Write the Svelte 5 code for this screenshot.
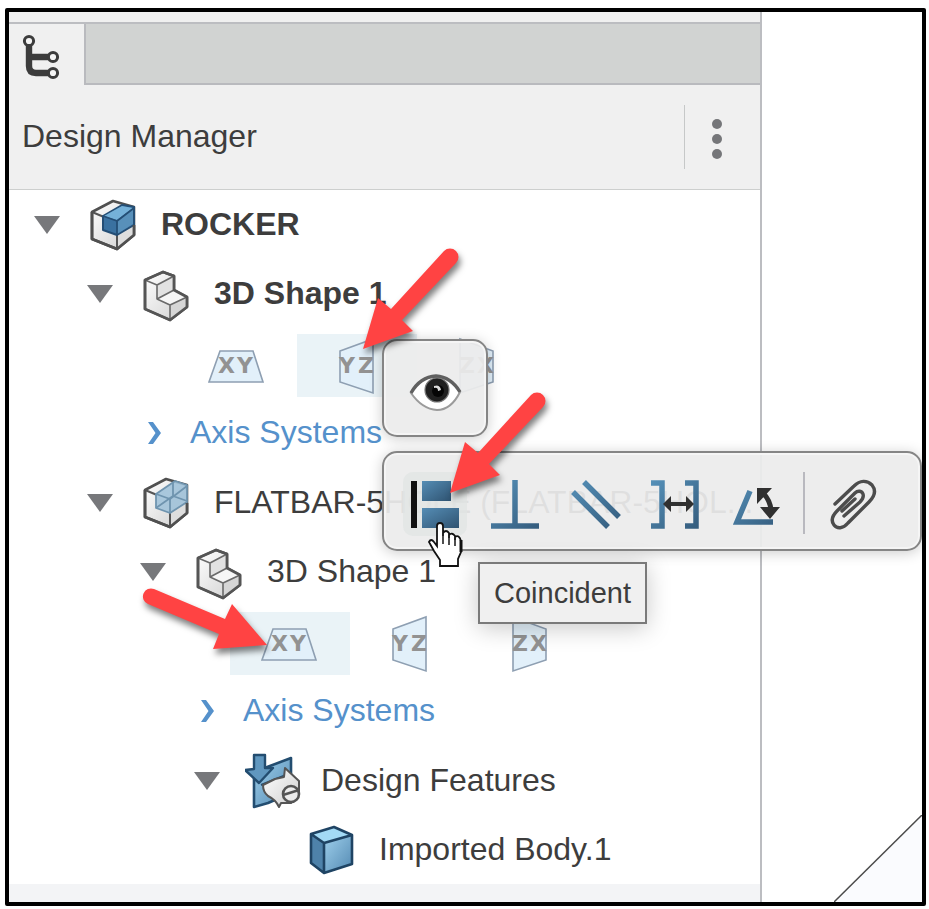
<script>
  const rows = [
    { kind: 'node', indent: 24, icon: 'product', label: 'ROCKER', bold: true },
    { kind: 'node', indent: 77, icon: 'shape', label: '3D Shape 1', bold: true },
    { kind: 'planes', indent: 168, selected: 'YZ' },
    { kind: 'axis', indent: 131, label: 'Axis Systems' },
    { kind: 'node', indent: 77, icon: 'part', label: 'FLATBAR-5HOLE (FLATBAR-5HOL...' },
    { kind: 'node', indent: 130, icon: 'shape', label: '3D Shape 1' },
    { kind: 'planes', indent: 221, selected: 'XY' },
    { kind: 'axis', indent: 184, label: 'Axis Systems' },
    { kind: 'node', indent: 184, icon: 'features', label: 'Design Features' },
    { kind: 'leaf', indent: 294, icon: 'body', label: 'Imported Body.1' }
  ];
  const planes = [
    { name: 'XY', points: '15,17 48,17 58,48 4,48', x: [13, 32] },
    { name: 'YZ', points: '15,17 48,5 48,59 15,48', x: [14, 33] },
    { name: 'ZX', points: '15,5 48,17 48,48 15,59', x: [14, 32] }
  ];
  const tools = ['Coincident', 'Perpendicular', 'Parallel', 'Offset', 'Angle'];
</script>

<svg class="defs" aria-hidden="true">
  <defs>
    <linearGradient id="steel" x1="0" y1="0" x2="1" y2="1">
      <stop offset="0" stop-color="#558db5" /><stop offset="1" stop-color="#2f5371" />
    </linearGradient>
    <linearGradient id="sky" x1="0" y1="0" x2="1" y2="1">
      <stop offset="0" stop-color="#9fd0ec" /><stop offset="1" stop-color="#5389b2" />
    </linearGradient>
    <linearGradient id="silver" x1="0" y1="0" x2="1" y2="1">
      <stop offset="0" stop-color="#ffffff" /><stop offset="1" stop-color="#cfcfcf" />
    </linearGradient>
    <linearGradient id="toolblue" gradientUnits="userSpaceOnUse" x1="10" y1="8" x2="54" y2="56">
      <stop offset="0" stop-color="#5590b8" /><stop offset="1" stop-color="#355d7e" />
    </linearGradient>
  </defs>
</svg>

<main>
  <div class="frame">
    <section class="panel">
      <div class="strip"></div>
      <div class="tabs">
        <button class="tab" aria-label="Design tree">
          <svg width="48" height="56" viewBox="0 0 48 56">
            <path d="M11 16V38Q11 45 18 45H34M11 29H34" fill="none" stroke="#3c3c3c" stroke-width="6.4" />
            <g fill="#f5f5f5" stroke="#3c3c3c" stroke-width="3"><circle cx="11" cy="13" r="4.6" /><circle cx="35" cy="29" r="4.6" /><circle cx="35" cy="45" r="4.6" /></g>
          </svg>
        </button>
        <div class="rest"></div>
      </div>
      <header>
        <h1>Design Manager</h1>
        <button class="more" aria-label="More options">
          <svg width="12" height="44" viewBox="0 0 12 44" fill="#757679"><circle cx="6" cy="9" r="5" /><circle cx="6" cy="24" r="5" /><circle cx="6" cy="39" r="5" /></svg>
        </button>
      </header>

      <ul>
        {#each rows as row}
          <li class={row.kind} style="padding-left: {row.indent}px">
            {#if row.kind === 'planes'}
              {#each planes as plane}
                <button class="plane" class:selected={plane.name === row.selected} aria-label="{plane.name} plane">
                  <svg width="64" height="64" viewBox="0 0 64 64">
                    <polygon points={plane.points} fill="#e2f0fa" stroke="#8e9fb2" stroke-width="1.6" />
                    <text y="39">{#each plane.name as letter, i}<tspan x={plane.x[i]}>{letter}</tspan>{/each}</text>
                  </svg>
                </button>
              {/each}
            {:else}
              {#if row.kind === 'node'}
                <button class="toggle" aria-label="Collapse {row.label}"><svg width="28" height="20" viewBox="0 0 28 20"><path d="M1 1H27L14 19Z" fill="#77787b" /></svg></button>
              {:else if row.kind === 'axis'}
                <button class="toggle" aria-label="Expand {row.label}"><svg width="28" height="28" viewBox="0 0 28 28"><path d="M8 2H13L21 13L13 24H8L15.500 13Z" fill="#5591cb" /></svg></button>
              {/if}
              {#if row.icon}
                <svg class="icon" width="56" height="56" viewBox="0 0 56 56" stroke-linejoin="round">
                  {#if row.icon === 'shape'}
                    <path d="M7 14L25 6L36 10V24L49 31V41L32 54L7 43Z" fill="url(#silver)" stroke="#555" stroke-width="2.4" />
                    <path d="M19 19L36 10V24L19 33Z" fill="#e2e2e2" /><path d="M19 33L36 24L49 31L32 39Z" fill="#f6f6f6" /><path d="M32 39L49 31V41L32 54Z" fill="#d6d6d6" />
                    <path d="M7 14L19 19L36 10M19 19V33L36 24M19 33L32 39L49 31M32 39V54" fill="none" stroke="#6a6a6a" stroke-width="1.6" />
                    <path d="M7 14L25 6L36 10V24L49 31V41L32 54L7 43Z" fill="none" stroke="#555" stroke-width="2.8" />
                  {:else if row.icon === 'product' || row.icon === 'part'}
                    <path d="M7 15L28 4L49 10V38L32 52L7 42Z" fill="url(#silver)" stroke="#505050" stroke-width="2.6" />
                    <path d="M33 26V52L49 38V14Z" fill="#dedede" />
                    <path d="M7 15L19 20M32 38V52" stroke="#555" stroke-width="2" />
                    {#if row.icon === 'product'}
                      <path d="M18 19L37 8L49 10V28L32 38L18 33Z" fill="#3a71a0" stroke="#244e75" stroke-width="2" />
                      <path d="M19 19L37 9L48 11L32 23Z" fill="#75b1d9" /><path d="M32 24L48 12V27L32 37Z" fill="#5890ba" />
                      <path d="M18 19L32 24L49 11M32 24V38" fill="none" stroke="#244e75" stroke-width="1.8" />
                    {:else}
                      <path d="M18 19L37 6L49 10V27L32 38L18 33Z" fill="#9fc2d9" fill-opacity=".88" stroke="#6f94af" stroke-width="1.8" />
                      <path d="M18 19L32 24L49 11M32 24V38M35 8V21L18 33M35 21L49 26" fill="none" stroke="#6f94af" stroke-width="1.8" />
                    {/if}
                    <path d="M18 33V20L7 15V42L32 52L49 38V28" fill="none" stroke="none" />
                    <path d="M7 15V42L32 52L49 38V28" fill="none" stroke="#505050" stroke-width="2.8" />
                  {:else if row.icon === 'features'}
                    <path d="M9 19L46 5V40L23 50L9 54Z" fill="url(#sky)" stroke="#234d70" stroke-width="2.6" />
                    <path d="M16 32L46 20" stroke="#234d70" stroke-width="2" />
                    <path d="M9 2H20V15H28L14 30L0 17L9 16Z" fill="#6097bf" stroke="#234d70" stroke-width="2.4" />
                    <path d="M18 32L30 26L39 24L40 15L54 28V41L46 50H36L34 54Q31 47 23 43Q18 39 18 32Z" fill="url(#silver)" stroke="#555" stroke-width="2" />
                    <circle cx="46" cy="41" r="8" fill="#ececec" stroke="#555" stroke-width="2.6" /><path d="M38 42L54 37" stroke="#555" stroke-width="2.4" />
                  {:else}
                    <path d="M8 12L31 5L49 13V42L21 51L8 41Z" fill="#4e82aa" />
                    <path d="M8 12L31 5L49 13L21 21Z" fill="#a3daf5" /><path d="M21 21L49 13V42L21 51Z" fill="url(#sky)" />
                    <path d="M8 12L31 5L49 13V42L21 51L8 41ZM8 12L21 21L49 13M21 21V51" fill="none" stroke="#1f4464" stroke-width="2.6" />
                  {/if}
                </svg>
              {/if}
              <span class:bold={row.bold}>{row.label}</span>
            {/if}
          </li>
        {/each}
      </ul>
      <div class="footer"></div>
    </section>

    <svg class="edge" width="88" height="87" viewBox="0 0 88 87" aria-hidden="true"><path d="M0 87L88 0V87Z" fill="#fafbfe" /><path d="M0 87L88 0" stroke="#4a4a4a" stroke-width="1.5" /></svg>

    <div class="popup view">
      <button aria-label="Show or hide">
        <svg width="64" height="64" viewBox="0 0 64 64">
          <path d="M8 33Q17 17 33 16Q48 17 57 32Q48 50 34 50Q19 49 8 33Z" fill="#fff" stroke="#9b9b9b" stroke-width="2" />
          <path d="M8 33Q17 17 33 16Q48 17 57 32" fill="none" stroke="#606060" stroke-width="3.4" />
          <circle cx="34" cy="30" r="12" fill="#202020" stroke="#777" stroke-width="1.2" /><circle cx="35" cy="31" r="6" fill="#050505" />
          <path d="M31 26Q37 24 38 30L35 31Q35 27 31 28Z" fill="#ddd" />
        </svg>
      </button>
    </div>

    <div class="popup toolbar">
      {#each tools as tool}
        <button aria-label={tool} class:active={tool === 'Coincident'}>
          <svg width="64" height="64" viewBox="0 0 64 64" fill="none" stroke="url(#toolblue)" stroke-width="5.500">
            {#if tool === 'Coincident'}
              <path d="M8 9H14V56H8Z" fill="#111" stroke="none" /><path d="M19 9H48V29H19Z" fill="url(#steel)" stroke="none" /><path d="M19 36H56V56H19Z" fill="url(#steel)" stroke="none" />
            {:else if tool === 'Perpendicular'}
              <path d="M32 8V54M8 54H56" />
            {:else if tool === 'Parallel'}
              <path d="M10 20L45 55M21 10L56 45" />
            {:else if tool === 'Offset'}
              <path d="M8 11H19V54H8M42 11H53V54H42" />
              <path d="M26 32H44" stroke="#303030" stroke-width="4" /><path d="M20 32L28 24V40ZM51 32L43 24V40Z" fill="#303030" stroke="none" />
            {:else}
              <path d="M27 19L14 50H50" />
              <path d="M40 21Q47 28 48 38" stroke="#303030" stroke-width="5" /><path d="M34 16H49L34 32ZM37 35H57L47 47Z" fill="#303030" stroke="none" />
            {/if}
          </svg>
        </button>
      {/each}
      <div class="divider"></div>
      <button aria-label="Attach">
        <svg width="64" height="64" viewBox="0 0 64 64"><path d="M14 32L33 14C39 8 46 8 51 13C55 18 54 24 48 30L27 51C22 57 16 57 13 53C10 49 11 44 16 39L34 21C37 18 41 19 42 22C43 25 42 27 39 30L23 44M21 39L34 27" fill="none" stroke="#4c4c4c" stroke-width="3.4" stroke-linecap="round" /></svg>
      </button>
    </div>

    <div class="tooltip" role="tooltip">Coincident</div>

    <svg class="marks" width="913" height="890" viewBox="9 12 913 890" aria-hidden="true">
      <path d="M437 546V526Q437 523 440 523Q443 523 443 526V536V533Q446 529 449 533V538V535Q452 532 455 536V540V537Q459 534 461 541V552L458 559V566H440V560L434 551L429 542Q431 538 434 542Z" fill="#fff" stroke="#111" stroke-width="1.8" />
      <path d="M443 533V544M449 535V545M455 538V546" stroke="#222" stroke-width="1.6" />
      <path d="M461 540V552" stroke="#111" stroke-width="3" />
      <g class="arrows">
        <path d="M363 349L378 298L391 309L444 251A8 8 0 0 1 456 263L402 320L413 331Z" />
        <path d="M450 493L465 442L478 453L531 395A8 8 0 0 1 543 407L489 464L500 475Z" />
        <path d="M267 645L232 604L225 619L154 589A8 8 0 0 0 148 604L219 634L213 649Z" />
      </g>
    </svg>
  </div>
</main>

<style>
  :global(body) { background: #fff; }
  * { box-sizing: border-box; }
  main { min-height: 100vh; padding: 8px 3px 3px 5px; display: flex; font-family: "Liberation Sans", Arial, sans-serif; font-size: 32px; color: #3d3d3d; }
  button { border: 0; padding: 0; margin: 0; background: none; font: inherit; color: inherit; display: flex; align-items: center; justify-content: center; flex: none; }
  svg { display: block; flex: none; }
  .defs { position: absolute; width: 0; height: 0; }
  .frame { position: relative; flex: 1; display: flex; border: 4px solid #000; border-radius: 2px; overflow: hidden; background: #fff; }
  .panel { width: 82.5%; display: flex; flex-direction: column; border-right: 2px solid #bcbdc1; }
  .strip { height: 12px; margin-right: -2px; background: #f0f0f0; border: solid #bcbdc1; border-width: 0 2px 2px 0; }
  .tabs { display: flex; height: 61px; background: #f0f0f0; }
  .tab { width: 75px; align-items: flex-start; justify-content: flex-start; padding: 4px 0 0 9px; }
  .rest { flex: 1; background: #d1d3d2; border: solid #b9babe; border-width: 0 0 2px 2px; }
  header { height: 105px; display: flex; align-items: center; background: #f0f0f0; border-bottom: 1px solid #cdcfce; padding-left: 13px; }
  h1 { flex: 1; margin: 0; padding-bottom: 2px; font-size: 32px; font-weight: 400; line-height: 40px; }
  .more { width: 76px; height: 64px; border-left: 1px solid #c6c8c8; padding-right: 12px; }
  ul { margin: 0; padding: 0; list-style: none; }
  li { height: 69px; display: flex; align-items: center; white-space: nowrap; overflow: hidden; line-height: 40px; }
  li span { padding-bottom: 2px; }
  .toggle { width: 28px; height: 28px; margin-right: 24px; }
  .axis .toggle { margin-right: 22px; }
  .icon { margin-right: 20px; }
  .bold { font-weight: 700; }
  .axis { color: #5591cb; }
  .axis span { padding-bottom: 4px; }
  .planes { height: 71px; padding-top: 4px; }
  .plane { width: 120px; height: 63px; }
  .plane.selected { background: #eaf3f7; }
  .plane text { font: 700 22px "DejaVu Sans", sans-serif; fill: #929292; }
  .footer { flex: 1; min-height: 18px; background: #f3f4f6; }
  .edge { position: absolute; right: 0; bottom: 0; }
  .popup { position: absolute; left: 373px; display: flex; border: 2px solid #858585; border-radius: 15px; background: rgba(236, 236, 236, .93); box-shadow: inset 0 0 0 2px #f5f5f5, 0 2px 14px rgba(0, 0, 0, .2); }
  .popup button { width: 64px; height: 64px; border-radius: 10px; }
  .view { top: 327px; padding: 19px 19px 11px; }
  .toolbar { top: 439px; right: 0; padding: 19px 19px 13px; gap: 16px; }
  .popup .active { background: rgba(224, 228, 227, .7); }
  .divider { width: 2px; height: 62px; background: #b9b9bf; }
  .tooltip { position: absolute; left: 469px; top: 550px; padding: 10px 14px; border: 2px solid #7a7a7a; background: #f0f0f0; font-size: 29px; line-height: 38px; box-shadow: 0 4px 24px rgba(0, 0, 0, .22); }
  .marks { position: absolute; left: 0; top: 0; pointer-events: none; }
  .arrows { fill: #ff4343; filter: drop-shadow(2px 5px 3px rgba(0, 0, 0, .5)); }
</style>
